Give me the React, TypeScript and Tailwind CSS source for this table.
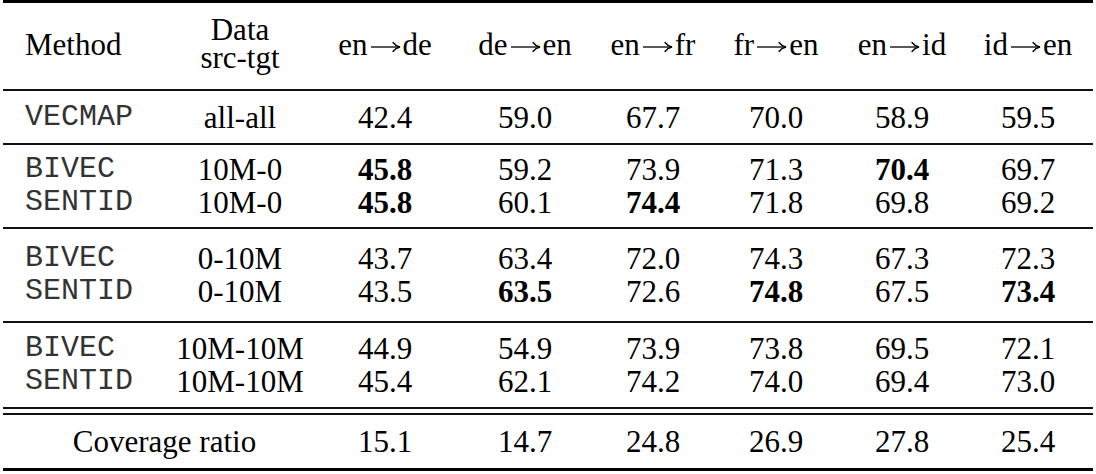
import React from "react";

type Row = { method: string; data: string; vals: string[]; bold?: number[] };

const grid =
  "grid grid-cols-[151px_172px_118px_162px_94px_152px_100px_141px] items-center";

const headers: [string, string][] = [
  ["en", "de"],
  ["de", "en"],
  ["en", "fr"],
  ["fr", "en"],
  ["en", "id"],
  ["id", "en"],
];

const groups: { h: string; rows: Row[] }[] = [
  {
    h: "h-[82px]",
    rows: [
      { method: "BIVEC", data: "10M-0", vals: ["45.8", "59.2", "73.9", "71.3", "70.4", "69.7"], bold: [0, 4] },
      { method: "SENTID", data: "10M-0", vals: ["45.8", "60.1", "74.4", "71.8", "69.8", "69.2"], bold: [0, 2] },
    ],
  },
  {
    h: "h-[92px]",
    rows: [
      { method: "BIVEC", data: "0-10M", vals: ["43.7", "63.4", "72.0", "74.3", "67.3", "72.3"] },
      { method: "SENTID", data: "0-10M", vals: ["43.5", "63.5", "72.6", "74.8", "67.5", "73.4"], bold: [1, 3, 5] },
    ],
  },
  {
    h: "h-[84px]",
    rows: [
      { method: "BIVEC", data: "10M-10M", vals: ["44.9", "54.9", "73.9", "73.8", "69.5", "72.1"] },
      { method: "SENTID", data: "10M-10M", vals: ["45.4", "62.1", "74.2", "74.0", "69.4", "73.0"] },
    ],
  },
];

function Rule({ thick }: { thick?: boolean }) {
  return <div className={thick ? "h-[3px] bg-black" : "h-[2px] bg-[#111]"} />;
}

// LaTeX style \rightarrow
function Arrow() {
  return (
    <svg viewBox="0 0 31 12" className="inline-block w-[31px] h-[12px] align-[2px] mx-[2px]" fill="none" stroke="black" strokeWidth="1.3">
      <path d="M1 6 H29.5" />
      <path d="M23 1.5 Q25.5 5 30 6 Q25.5 7 23 10.5" strokeLinecap="round" />
    </svg>
  );
}

function Vals({ vals, bold = [] }: { vals: string[]; bold?: number[] }) {
  return (
    <>
      {vals.map((v, i) => (
        <div
          key={i}
          className={`text-center ${i === 5 ? "pl-[11px]" : ""} ${bold.includes(i) ? "font-bold" : ""}`}
        >
          {v}
        </div>
      ))}
    </>
  );
}

function DataRow({ row }: { row: Row }) {
  return (
    <div className={`${grid} h-[33px] leading-[33px]`}>
      <div className="pl-[22px] font-['Liberation_Mono',monospace] text-[30px] text-[#333]">{row.method}</div>
      <div className="text-center">{row.data}</div>
      <Vals vals={row.vals} bold={row.bold} />
    </div>
  );
}

export default function App() {
  return (
    <div className="w-[1096px] h-[474px] bg-white px-[3px] text-black text-[31px] font-['Liberation_Serif',serif]">
      <Rule thick />
      <div className={`${grid} h-[86px]`}>
        <div className="pl-[22px] leading-[33px] pb-[4px]">Method</div>
        <div className="text-center leading-[29px] pb-[6px] flex flex-col">
          <span className="h-[28px]">Data</span>
          <span className="h-[28px]">src-tgt</span>
        </div>
        {headers.map(([a, b], i) => (
          <div key={i} className={`text-center leading-[33px] pb-[4px] ${i === 5 ? "pl-[11px]" : ""}`}>
            {a}
            <Arrow />
            {b}
          </div>
        ))}
      </div>
      <Rule />
      <div className={`${grid} h-[52px] leading-[33px]`}>
        <div className="pl-[22px] font-['Liberation_Mono',monospace] text-[30px] text-[#333]">VECMAP</div>
        <div className="text-center">all-all</div>
        <Vals vals={["42.4", "59.0", "67.7", "70.0", "58.9", "59.5"]} />
      </div>
      {groups.map((g, gi) => (
        <React.Fragment key={gi}>
          <Rule />
          <div className={`${g.h} flex flex-col justify-center`}>
            {g.rows.map((r, ri) => (
              <DataRow key={ri} row={r} />
            ))}
          </div>
        </React.Fragment>
      ))}
      <Rule />
      <div className="h-[4px]" />
      <Rule />
      <div className={`${grid} h-[53px] leading-[33px]`}>
        <div className="col-span-2 text-center">Coverage ratio</div>
        <Vals vals={["15.1", "14.7", "24.8", "26.9", "27.8", "25.4"]} />
      </div>
      <Rule thick />
    </div>
  );
}
